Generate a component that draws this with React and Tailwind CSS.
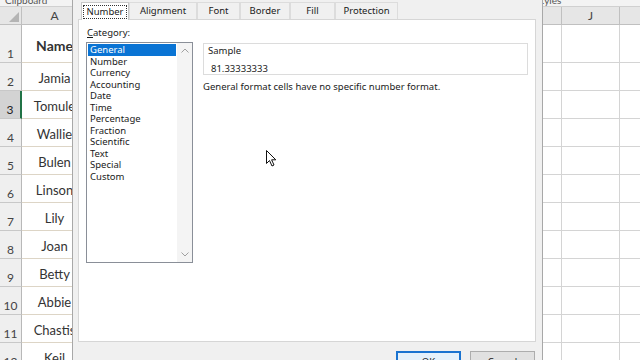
import React from "react";

const names = ["Jamia", "Tomule", "Wallie", "Bulen", "Linson", "Lily", "Joan", "Betty", "Abbie", "Chastis", "Keil"];

const categories = [
  "General", "Number", "Currency", "Accounting", "Date", "Time",
  "Percentage", "Fraction", "Scientific", "Text", "Special", "Custom",
];

const tabs = [
  { label: "Number", w: "w-[48px]" },
  { label: "Alignment", w: "w-[68px]" },
  { label: "Font", w: "w-[43px]" },
  { label: "Border", w: "w-[50px]" },
  { label: "Fill", w: "w-[45px]" },
  { label: "Protection", w: "w-[63px]" },
];

const sheetFont = { fontFamily: "Lato, 'Open Sans', sans-serif" };
const uiFont = { fontFamily: "'Noto Sans', 'Open Sans', sans-serif" };

function SheetRow({ num, name, tall, selected }) {
  return (
    <div className={`flex shrink-0 ${tall ? "h-[38px]" : "h-[28px]"}`}>
      <div
        className={`w-[22px] shrink-0 flex items-end justify-center pb-[2px] text-[12px] leading-[12px] border-b border-[#c8c8c8] ${
          selected ? "bg-[#d3d3d3] text-[#222] border-r-2 border-r-[#217346]" : "bg-[#efefef] text-[#444] border-r border-r-[#b8b8b8]"
        }`}
      >
        {num}
      </div>
      <div
        className={`w-[66px] shrink-0 flex justify-center border-b border-r border-[#ddd5c6] text-[#333] ${
          tall ? "items-center pt-[3px] text-[14px] font-bold text-[#222]" : "items-end pb-[4px] text-[13px] leading-[16px]"
        }`}
      >
        {name}
      </div>
      <div className="w-[454px] shrink-0 border-b border-r border-[#dadada]" />
      <div className="w-[20px] shrink-0 border-b border-r border-[#d4d4d4]" />
      <div className="w-[58px] shrink-0 border-b border-r border-[#d4d4d4]" />
      <div className="flex-1 border-b border-[#d4d4d4]" />
    </div>
  );
}

function Sheet() {
  return (
    <div className="flex flex-col w-full h-full bg-white" style={sheetFont}>
      {/* ribbon bottom edge */}
      <div className="h-[7px] shrink-0 bg-[#f3f3f3] border-b border-[#d0d0d0] flex items-end overflow-hidden text-[10px] leading-[10px] text-[#555]">
        <span className="ml-[5px] mb-[1px]">Clipboard</span>
        <span className="ml-[8px] mb-[1px] text-[8px]">⌝</span>
        <span className="ml-[476px] mb-[1px]">Styles</span>
      </div>
      {/* column headers */}
      <div className="flex h-[18px] shrink-0 text-[12px] text-[#444]">
        <div className="w-[22px] shrink-0 bg-[#e6e6e6] border-b border-r border-[#c0c0c0] relative">
          <div className="absolute right-[2px] bottom-[2px] w-0 h-0 border-l-[10px] border-l-transparent border-b-[10px] border-b-[#b4b4b4]" />
        </div>
        <div className="w-[66px] shrink-0 bg-[#e6e6e6] border-b border-r border-[#c0c0c0] flex items-center justify-center">A</div>
        <div className="w-[454px] shrink-0 bg-[#e6e6e6] border-b border-r border-[#c0c0c0]" />
        <div className="w-[20px] shrink-0 bg-[#e6e6e6] border-b border-r border-[#c0c0c0]" />
        <div className="w-[58px] shrink-0 bg-[#e6e6e6] border-b border-r border-[#c0c0c0] flex items-center justify-center">J</div>
        <div className="flex-1 bg-[#e6e6e6] border-b border-[#c0c0c0]" />
      </div>
      <SheetRow num={1} name="Name" tall />
      {names.map((n, i) => (
        <SheetRow key={n} num={i + 2} name={n} selected={i === 1} />
      ))}
    </div>
  );
}

function Chevron({ up }) {
  return (
    <svg width="8" height="5" viewBox="0 0 8 5" fill="none" stroke="#a0a0a0" strokeWidth="1">
      {up ? <path d="M0.5 4.5 L4 1 L7.5 4.5" /> : <path d="M0.5 0.5 L4 4 L7.5 0.5" />}
    </svg>
  );
}

function Dialog() {
  return (
    <div
      className="absolute top-0 left-[72px] w-[471px] h-[360px] bg-[#f0f0f0] border-l border-r border-[#a8a8a8] flex flex-col text-[#1a1a1a]"
      style={uiFont}
    >
      {/* tabs */}
      <div className="flex h-[19px] pt-[2px] pl-[8px] shrink-0 text-[9.5px] leading-[12px]">
        {tabs.map((t, i) => (
          <div
            key={t.label}
            className={`${t.w} shrink-0 flex items-center justify-center border-t border-l border-r ${
              i === 0 ? "bg-white border-[#c8c8c8] -mb-[1px] relative z-10" : "bg-[#f0f0f0] border-[#dcdcdc]"
            }`}
          >
            <span className={i === 0 ? "px-[2px] border border-dotted border-[#333]" : ""}>{t.label}</span>
          </div>
        ))}
      </div>

      {/* panel */}
      <div className="ml-[5px] w-[458px] h-[323px] shrink-0 bg-white border border-[#d6d6d6] flex pl-[7px] pt-[7px] gap-[10px]">
        <div className="w-[107px] shrink-0 flex flex-col">
          <div className="text-[9.5px] leading-[12px] h-[12px] mb-[3px] pl-[1px]">
            <span className="underline">C</span>ategory:
          </div>
          <div className="h-[221px] border border-[#8a8f98] flex">
            <div className="flex-1 p-[1px] text-[9.5px] leading-[11.5px]">
              {categories.map((c, i) => (
                <div key={c} className={`pl-[2px] ${i === 0 ? "bg-[#0a74d4] text-white" : ""}`}>
                  {c}
                </div>
              ))}
            </div>
            <div className="w-[15px] shrink-0 bg-[#f4f4f4] flex flex-col items-center justify-between py-[5px]">
              <Chevron up />
              <Chevron />
            </div>
          </div>
        </div>

        <div className="w-[325px] shrink-0 flex flex-col pt-[16px]">
          <div className="h-[32px] border border-[#dcdcdc] pl-[4px] pt-[1px] text-[9.5px] leading-[12px]">
            <div>Sample</div>
            <div className="pl-[3px] mt-[6px]">81.33333333</div>
          </div>
          <div className="mt-[6px] text-[9.5px] leading-[12px]">General format cells have no specific number format.</div>
        </div>
      </div>

      {/* buttons */}
      <div className="flex gap-[9px] pl-[323px] mt-[9px] text-[9.5px]">
        <div className="w-[65px] h-[23px] border-2 border-[#1a73d0] bg-[#e5f1fb] flex items-center justify-center">OK</div>
        <div className="w-[65px] h-[23px] border border-[#adadad] bg-[#e1e1e1] flex items-center justify-center">Cancel</div>
      </div>
    </div>
  );
}

export default function App() {
  return (
    <div className="relative w-[640px] h-[360px] overflow-hidden bg-white">
      <Sheet />
      <Dialog />
      {/* mouse pointer */}
      <svg className="absolute left-[266px] top-[150px]" width="11" height="17" viewBox="0 0 11 17">
        <path d="M0.5 0.5 L0.5 13.5 L3.5 10.5 L6 16 L8 15 L5.6 9.8 L9.8 9.8 Z" fill="white" stroke="#111" strokeWidth="1" strokeLinejoin="round" />
      </svg>
    </div>
  );
}
